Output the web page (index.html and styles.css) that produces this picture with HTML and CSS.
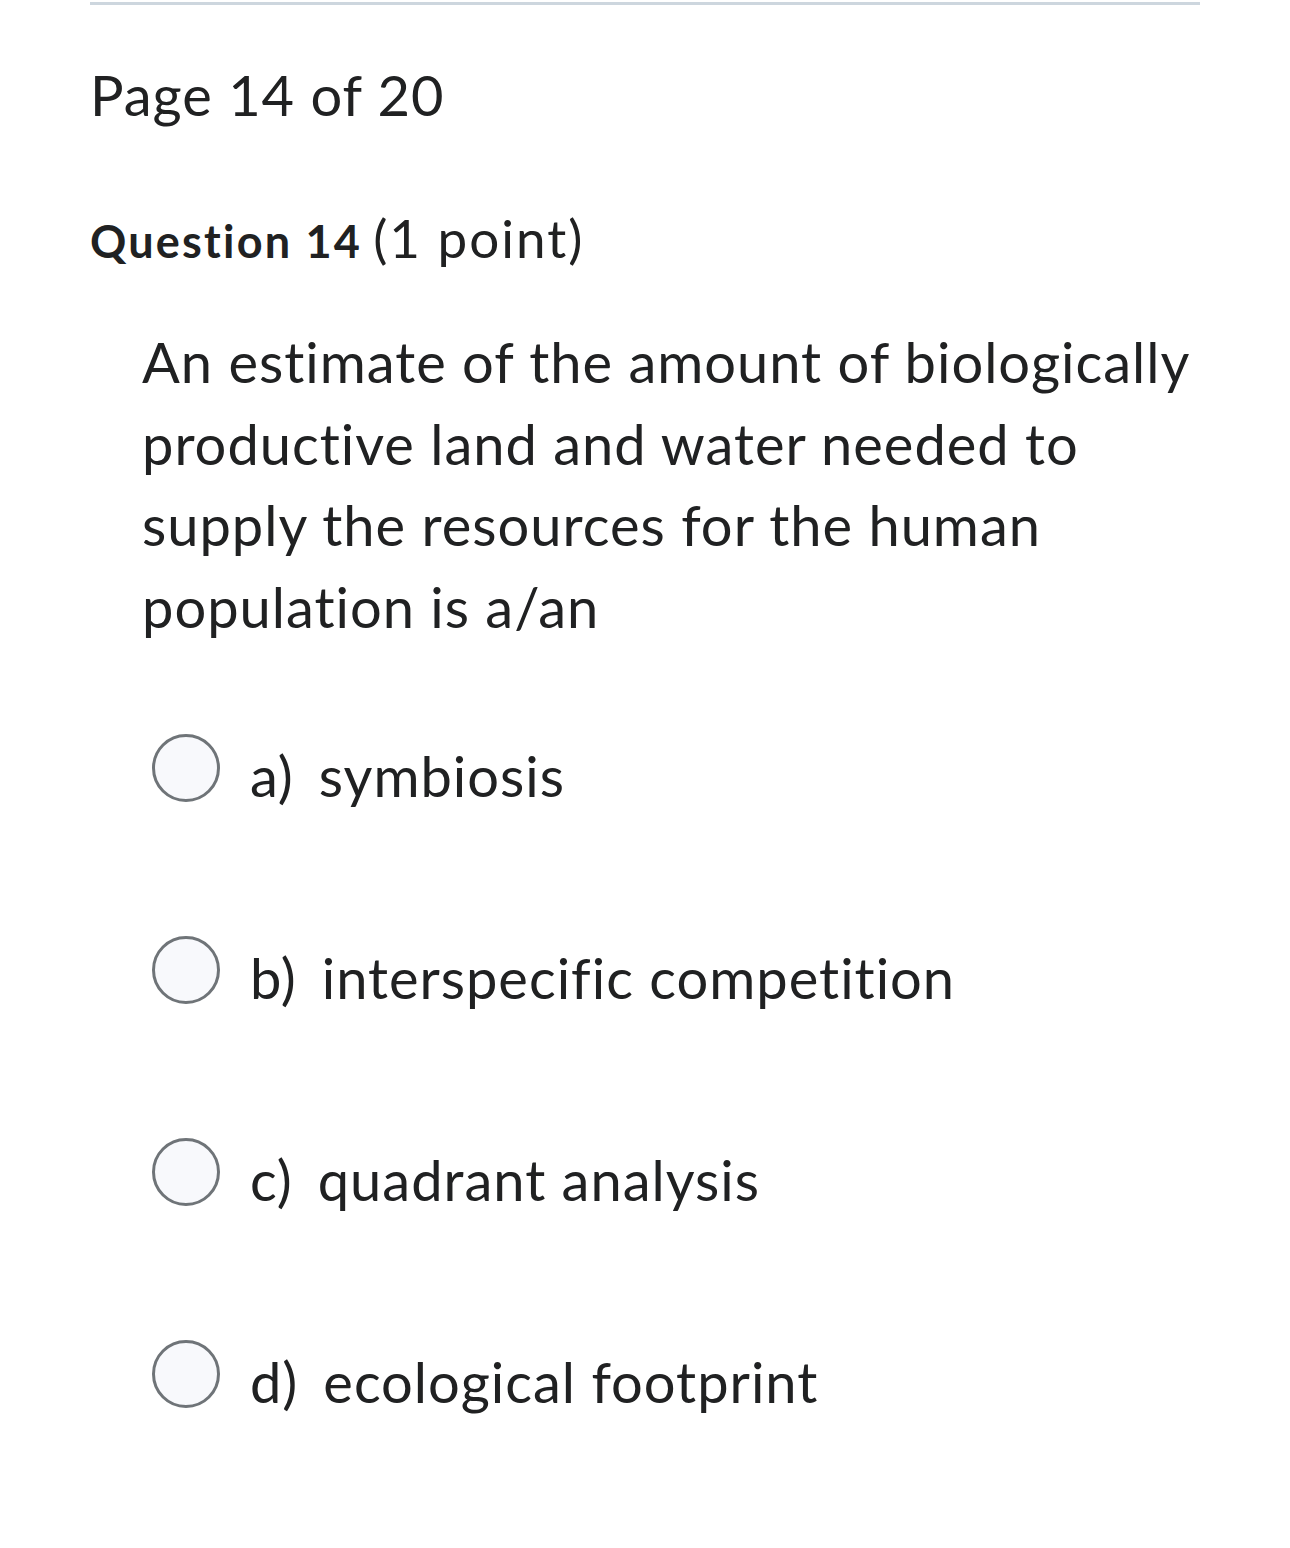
FILE: index.html
```html
<!DOCTYPE html>
<html>
<head>
<meta charset="utf-8">
<link rel="stylesheet" href="styles.css">
</head>
<body>
<div class="page">
  <hr class="rule">
  <h1 class="page-title">Page 14 of 20</h1>
  <h2 class="q-title"><span class="q-num">Question 14</span> <span class="q-pts">(1 point)</span></h2>
  <p class="q-text">An estimate of the amount of biologically productive land and water needed to supply the resources for the human population is a/an</p>
  <ul class="options">
    <li class="option"><span class="radio"></span><span class="opt-body"><span class="opt-label">a)</span><span class="opt-text">symbiosis</span></span></li>
    <li class="option"><span class="radio"></span><span class="opt-body"><span class="opt-label">b)</span><span class="opt-text">interspecific competition</span></span></li>
    <li class="option"><span class="radio"></span><span class="opt-body"><span class="opt-label">c)</span><span class="opt-text">quadrant analysis</span></span></li>
    <li class="option"><span class="radio"></span><span class="opt-body"><span class="opt-label">d)</span><span class="opt-text">ecological footprint</span></span></li>
  </ul>
</div>
</body>
</html>
```

FILE: styles.css
```css
html, body {
  margin: 0;
  padding: 0;
  background: #ffffff;
}
body {
  font-family: Lato, "Noto Sans", sans-serif;
  color: #202122;
  font-variant-ligatures: none;
  letter-spacing: 1px;
}
.page {
  width: 1110px;
  margin-left: 90px;
}
.rule {
  margin: 0;
  margin-top: 2px;
  border: 0;
  height: 3px;
  background: #cdd6de;
}
.page-title {
  margin: 0;
  margin-top: 57px;
  font-size: 56px;
  font-weight: 400;
  line-height: 66px;
}
.q-title {
  margin: 0;
  margin-top: 80px;
  font-weight: 400;
  line-height: 60px;
}
.q-num {
  font-weight: 700;
  font-size: 45px;
  letter-spacing: 2.2px;
}
.q-pts {
  font-size: 53px;
  letter-spacing: 2px;
  margin-left: 4px;
}
.q-text {
  margin: 0;
  margin-top: 42px;
  padding-left: 52px;
  font-size: 56px;
  line-height: 81.5px;
}
.options {
  list-style: none;
  margin: 0;
  margin-top: 87px;
  padding-left: 62px;
}
.option {
  display: flex;
  align-items: center;
  height: 68px;
  margin-bottom: 134px;
  font-size: 56px;
}
.radio {
  box-sizing: border-box;
  width: 68px;
  height: 68px;
  border-radius: 50%;
  border: 3px solid #6f7478;
  background: #f8f9fc;
  flex: none;
}
.opt-body {
  display: flex;
  padding-top: 14px;
  line-height: 67px;
}
.opt-label {
  margin-left: 30px;
}
.opt-text {
  margin-left: 25px;
}
```
